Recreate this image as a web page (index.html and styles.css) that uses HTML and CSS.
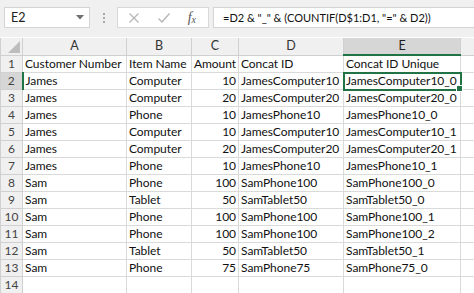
FILE: index.html
```html
<!DOCTYPE html>
<html>
<head>
<meta charset="utf-8">
<link rel="stylesheet" href="styles.css">
</head>
<body>
<div class="app">
  <div class="fbar">
    <div class="namebox"><span>E2</span><svg class="dd" width="8" height="5" viewBox="0 0 8 5"><path d="M0 0H8L4 4.5Z" fill="#707070"/></svg></div>
    <div class="grip"><i></i><i></i><i></i></div>
    <div class="btns">
      <svg width="12" height="12" viewBox="0 0 12 12"><path d="M1.5 1.5L10.5 10.5M10.5 1.5L1.5 10.5" stroke="#b4b4b4" stroke-width="1.2"/></svg>
      <svg width="14" height="12" viewBox="0 0 14 12"><path d="M1.5 6.5L5 10L12.5 1.5" stroke="#b4b4b4" stroke-width="1.3" fill="none"/></svg>
      <span class="fx">f<sub>x</sub></span>
    </div>
    <div class="formula">=D2 &amp; "_" &amp; (COUNTIF(D$1:D1, "=" &amp; D2))</div>
  </div>
  <table class="grid">
    <colgroup>
      <col class="c0"><col class="ca"><col class="cb"><col class="cc"><col class="cd"><col class="ce"><col class="cf">
    </colgroup>
    <thead>
      <tr><th class="corner"><svg width="12" height="12" viewBox="0 0 12 12"><path d="M12 0V12H0Z" fill="#bdbdbd"/></svg></th><th>A</th><th>B</th><th>C</th><th>D</th><th class="sel">E</th><th></th></tr>
    </thead>
    <tbody>
      <tr><th>1</th><td>Customer Number</td><td>Item Name</td><td>Amount</td><td>Concat ID</td><td>Concat ID Unique</td><td></td></tr>
      <tr><th class="selrow">2</th><td>James</td><td>Computer</td><td class="n">10</td><td>JamesComputer10</td><td class="active">JamesComputer10_0<span class="handle"></span></td><td></td></tr>
      <tr><th>3</th><td>James</td><td>Computer</td><td class="n">20</td><td>JamesComputer20</td><td>JamesComputer20_0</td><td></td></tr>
      <tr><th>4</th><td>James</td><td>Phone</td><td class="n">10</td><td>JamesPhone10</td><td>JamesPhone10_0</td><td></td></tr>
      <tr><th>5</th><td>James</td><td>Computer</td><td class="n">10</td><td>JamesComputer10</td><td>JamesComputer10_1</td><td></td></tr>
      <tr><th>6</th><td>James</td><td>Computer</td><td class="n">20</td><td>JamesComputer20</td><td>JamesComputer20_1</td><td></td></tr>
      <tr><th>7</th><td>James</td><td>Phone</td><td class="n">10</td><td>JamesPhone10</td><td>JamesPhone10_1</td><td></td></tr>
      <tr><th>8</th><td>Sam</td><td>Phone</td><td class="n">100</td><td>SamPhone100</td><td>SamPhone100_0</td><td></td></tr>
      <tr><th>9</th><td>Sam</td><td>Tablet</td><td class="n">50</td><td>SamTablet50</td><td>SamTablet50_0</td><td></td></tr>
      <tr><th>10</th><td>Sam</td><td>Phone</td><td class="n">100</td><td>SamPhone100</td><td>SamPhone100_1</td><td></td></tr>
      <tr><th>11</th><td>Sam</td><td>Phone</td><td class="n">100</td><td>SamPhone100</td><td>SamPhone100_2</td><td></td></tr>
      <tr><th>12</th><td>Sam</td><td>Tablet</td><td class="n">50</td><td>SamTablet50</td><td>SamTablet50_1</td><td></td></tr>
      <tr><th>13</th><td>Sam</td><td>Phone</td><td class="n">75</td><td>SamPhone75</td><td>SamPhone75_0</td><td></td></tr>
      <tr><th>14</th><td></td><td></td><td></td><td></td><td></td><td></td></tr>
    </tbody>
  </table>
</div>
</body>
</html>
```

FILE: styles.css
```css
html, body { margin: 0; padding: 0; }
body { width: 474px; height: 293px; overflow: hidden; background: #fff; font-family: "Lato", "Open Sans", sans-serif; }
.app { width: 474px; height: 293px; overflow: hidden; }

.fbar { height: 37px; background: #f0f0f0; display: flex; align-items: flex-start; padding-top: 7px; box-sizing: border-box; }
.namebox { margin-left: 4px; width: 86px; height: 21px; box-sizing: border-box; background: #fff; border: 1px solid #d4d4d4; display: flex; align-items: center; justify-content: space-between; padding: 0 5px 0 6px; font-size: 12.5px; color: #222; }
.dd { margin-top: -1px; }
.grip { width: 27px; height: 21px; display: flex; flex-direction: column; align-items: center; justify-content: center; gap: 2px; }
.grip i { display: block; width: 2px; height: 2px; background: #a8a8a8; }
.btns { width: 92px; height: 21px; box-sizing: border-box; background: #fff; border: 1px solid #d8d8d8; display: flex; align-items: center; justify-content: space-between; padding: 0 12px 0 10px; }
.fx { font-family: "Liberation Serif", serif; font-style: italic; font-size: 14px; color: #555; line-height: 1; }
.fx sub { font-size: 10px; vertical-align: -1px; }
.formula { margin-left: 4px; flex: 1; height: 21px; box-sizing: border-box; background: #fff; border: 1px solid #d4d4d4; border-right: none; font-size: 11px; color: #111; padding-left: 9px; line-height: 19px; white-space: nowrap; }

.grid { border-collapse: collapse; table-layout: fixed; width: 488px; font-size: 12px; letter-spacing: -0.05px; color: #111; margin-top: 1px; }
.c0 { width: 22px; } .ca { width: 104px; } .cb { width: 65px; } .cc { width: 47px; } .cd { width: 105px; } .ce { width: 117px; } .cf { width: 28px; }
.grid th, .grid td { height: 17px; padding: 0 0 0 2px; box-sizing: border-box; white-space: nowrap; overflow: visible; line-height: 16px; }
.grid td { border: 1px solid #dadada; }
.grid td.n { text-align: right; padding: 0 2px 0 0; }
.grid thead th { background: #f0f0f0; border: 1px solid #d0d0d0; border-top: none; font-weight: normal; color: #333; text-align: center; padding: 0; font-size: 12.5px; }
.grid thead th.sel { background: #d6d6d6; border-bottom: 2px solid #217346; color: #1e1e1e; }
.grid thead th.corner { text-align: right; vertical-align: bottom; padding: 0 2px 2px 0; }
.grid thead th.corner svg { display: block; margin-left: auto; }
.grid tbody th { background: #f0f0f0; border: 1px solid #d0d0d0; font-weight: normal; color: #444; text-align: center; padding: 0; font-size: 12px; }
.grid tbody th.selrow { background: #d6d6d6; border-right: 2px solid #217346; }
.grid td.active { position: relative; outline: 2px solid #217346; outline-offset: -1px; }
.handle { position: absolute; right: -3px; bottom: -3px; width: 5px; height: 5px; background: #217346; border: 1px solid #fff; }
```
